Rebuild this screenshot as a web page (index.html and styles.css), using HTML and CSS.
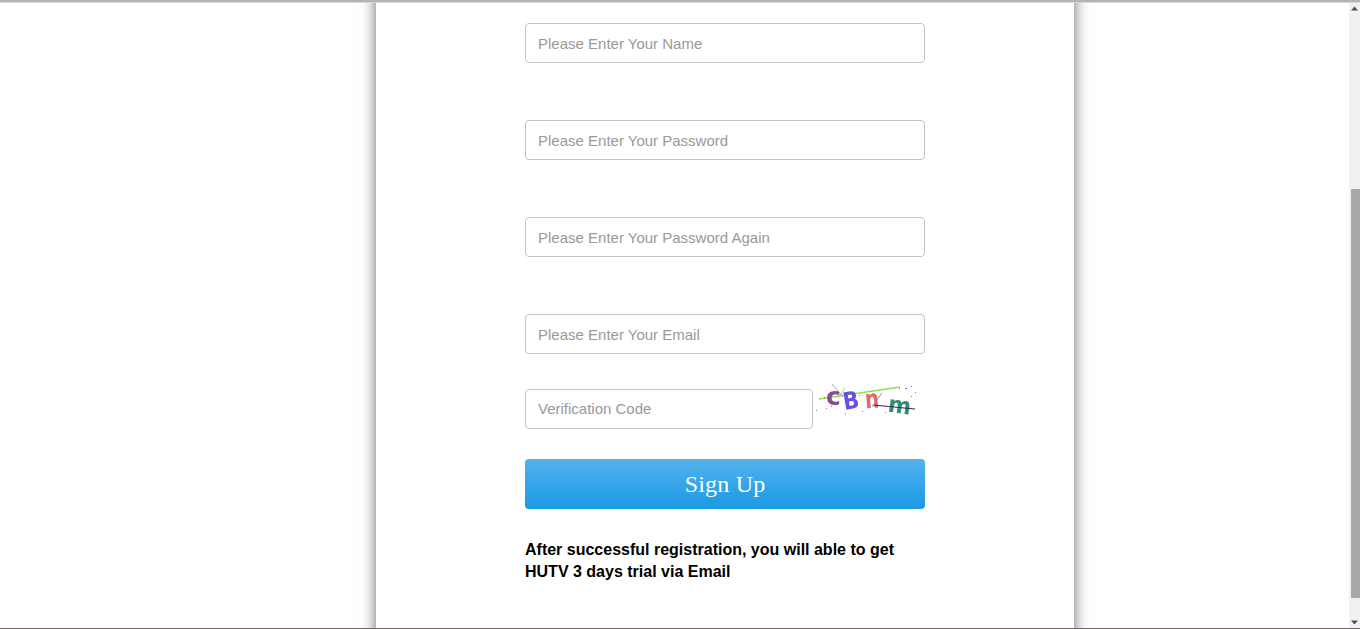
FILE: index.html
```html
<!DOCTYPE html>
<html lang="en">
<head>
<meta charset="utf-8">
<title>Sign Up</title>
<link rel="stylesheet" href="styles.css">
</head>
<body>
<div class="top-line"></div>
<div class="window">
  <main class="page">
    <section class="card">
      <form class="form">
        <div class="field"><input class="input" type="text" placeholder="Please Enter Your Name"></div>
        <div class="field"><input class="input" type="text" placeholder="Please Enter Your Password"></div>
        <div class="field"><input class="input" type="text" placeholder="Please Enter Your Password Again"></div>
        <div class="field"><input class="input" type="text" placeholder="Please Enter Your Email"></div>
        <div class="captcha-row">
          <input class="input captcha-input" type="text" placeholder="Verification Code">
          <svg class="captcha" width="104" height="40" viewBox="0 0 104 40" aria-label="captcha">
            <line x1="4" y1="18" x2="85" y2="6" stroke="#8fe04f" stroke-width="1.4"/>
            <line x1="17" y1="3" x2="28" y2="16" stroke="#b9a3c9" stroke-width="1"/>
            <line x1="30" y1="7" x2="23" y2="17" stroke="#9fc7b8" stroke-width="1"/>
            <text class="cap-letter" x="11" y="24" fill="#8a4a93" font-size="25">c</text>
            <text class="cap-letter" x="28" y="28" fill="#6b4fe0" font-size="24" textLength="16" lengthAdjust="spacingAndGlyphs" transform="rotate(-10 35 20)">B</text>
            <text class="cap-letter" x="50" y="27" fill="#dd6a66" font-size="26" textLength="14" lengthAdjust="spacingAndGlyphs" transform="rotate(-5 57 20)">n</text>
            <text class="cap-letter" x="73" y="32" fill="#2f8f6f" font-size="23" textLength="23" lengthAdjust="spacingAndGlyphs" transform="rotate(8 84 26)">m</text>
            <line x1="58" y1="24" x2="100" y2="28" stroke="#4a1a5e" stroke-width="1.2"/>
            <line x1="57" y1="26" x2="67" y2="12" stroke="#8b8fc0" stroke-width="1"/>
            <g fill="#8d7f99">
              <rect x="1" y="29" width="1" height="1"/><rect x="11" y="27" width="1" height="1"/><rect x="16" y="25" width="1" height="1"/>
              <rect x="30" y="32" width="1" height="1"/><rect x="44" y="14" width="1" height="1"/><rect x="47" y="30" width="1" height="1"/>
              <rect x="70" y="31" width="1" height="1"/><rect x="84" y="7" width="1" height="1"/><rect x="90" y="7" width="2" height="1"/>
              <rect x="96" y="5" width="1" height="1"/><rect x="96" y="15" width="1" height="1"/><rect x="93" y="21" width="1" height="1"/>
              <rect x="9" y="16" width="1" height="1"/><rect x="100" y="11" width="1" height="1"/>
            </g>
          </svg>
        </div>
        <button class="submit" type="button">Sign Up</button>
        <p class="note">After successful registration, you will able to get HUTV 3 days trial via Email</p>
      </form>
    </section>
  </main>
  <div class="scrollbar">
    <svg class="arrow" width="11" height="11" viewBox="0 0 11 11"><path d="M5.5 3.5 9 7.5H2z" fill="#505050"/></svg>
    <div class="track"><div class="thumb"></div></div>
    <svg class="arrow" width="11" height="11" viewBox="0 0 11 11"><path d="M5.5 7.5 9 3.5H2z" fill="#505050"/></svg>
  </div>
</div>
<div class="bottom-line"></div>
</body>
</html>
```
FILE: styles.css
```css
* { box-sizing: border-box; }
html, body { margin: 0; padding: 0; height: 629px; overflow: hidden; background: #fff; }
body { display: flex; flex-direction: column; font-family: "Liberation Sans", Arial, sans-serif; }
.top-line { height: 3px; flex: none; background: linear-gradient(#b4b4b4 2px, #d8d8d8 2px); position: relative; z-index: 1; }
.window { flex: 1; min-height: 0; display: flex; }
.bottom-line { height: 1px; flex: none; background: #6f665c; position: relative; z-index: 1; }
.page { flex: 1; min-width: 0; display: flex; padding-left: 376px; overflow: hidden; }
.card { width: 698px; height: calc(100% + 80px); margin-top: -40px; background: #fff; box-shadow: 0 0 14px rgba(0, 0, 0, .6); display: flex; justify-content: center; flex: none; }
.form { width: 400px; padding-top: 60px; display: flex; flex-direction: column; }
.field { height: 97px; flex: none; }
.input { display: block; width: 400px; height: 40px; padding: 0 12px; border: 1px solid #c4c4c4; border-radius: 4px; background: #fff; font: 15px "Liberation Sans", Arial, sans-serif; outline: none; }
.input::placeholder { color: #999; opacity: 1; }
.captcha-row { margin-top: -22px; display: flex; align-items: flex-start; }
.captcha-input { width: 288px; flex: none; padding-bottom: 2px; }
.captcha { flex: none; margin-top: -8px; margin-left: 2px; filter: blur(.4px); }
.cap-letter { font-family: "DejaVu Sans", sans-serif; font-weight: 700; }
.submit { margin-top: 30px; height: 50px; width: 400px; border: 0; border-radius: 4px; background: linear-gradient(#52b3ec, #1b98e4); color: #fff; font: 24px "Liberation Serif", "Times New Roman", serif; letter-spacing: .2px; padding: 0; }
.note { margin: 30px 0 0; font-size: 16px; line-height: 22px; font-weight: 700; color: #000; }
.scrollbar { width: 11px; flex: none; background: #f1f1f1; display: flex; flex-direction: column; }
.arrow { flex: none; display: block; }
.track { flex: 1; padding-top: 175px; padding-bottom: 19px; display: flex; }
.thumb { flex: 1; margin-left: 2px; background: #a8a8a8; }
```
